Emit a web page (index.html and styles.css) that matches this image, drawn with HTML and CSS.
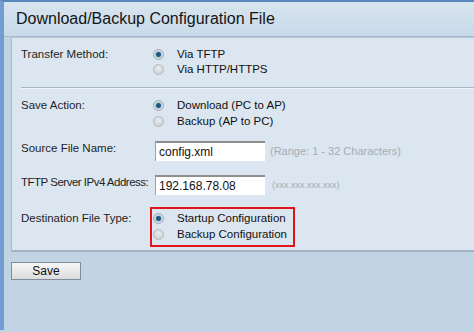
FILE: index.html
```html
<!DOCTYPE html>
<html>
<head>
<meta charset="utf-8">
<link rel="stylesheet" href="styles.css">
</head>
<body>
<div class="frame">
  <div class="header">Download/Backup Configuration File</div>
  <div class="content">
    <div class="panel">
      <div class="row first">
        <div class="label">Transfer Method:</div>
        <div class="options">
          <label class="opt"><input type="radio" class="radio" name="tm" checked>Via TFTP</label>
          <label class="opt"><input type="radio" class="radio" name="tm">Via HTTP/HTTPS</label>
        </div>
      </div>
      <div class="divider"></div>
      <div class="row second">
        <div class="label">Save Action:</div>
        <div class="options">
          <label class="opt"><input type="radio" class="radio" name="sa" checked>Download (PC to AP)</label>
          <label class="opt"><input type="radio" class="radio" name="sa">Backup (AP to PC)</label>
        </div>
      </div>
      <div class="row field src">
        <div class="label">Source File Name:</div>
        <div class="control">
          <input class="text" type="text" value="config.xml">
          <span class="hint">(Range: 1 - 32 Characters)</span>
        </div>
      </div>
      <div class="row field ip">
        <div class="label tight">TFTP Server IPv4 Address:</div>
        <div class="control">
          <input class="text" type="text" value="192.168.78.08">
          <span class="hint small">(xxx.xxx.xxx.xxx)</span>
        </div>
      </div>
      <div class="row dest">
        <div class="label">Destination File Type:</div>
        <div class="options highlight">
          <label class="opt"><input type="radio" class="radio" name="dt" checked>Startup Configuration</label>
          <label class="opt"><input type="radio" class="radio" name="dt">Backup Configuration</label>
        </div>
      </div>
    </div>
    <button class="btn">Save</button>
  </div>
</div>
</body>
</html>
```
FILE: styles.css
```css
html, body {
  margin: 0;
  padding: 0;
}
body {
  background: #c1d4e4;
  font-family: "Liberation Sans", Arial, sans-serif;
  color: #1e1e1e;
  width: 474px;
  height: 332px;
  overflow: hidden;
}
.frame {
  border-left: 4px solid #729dd3;
  border-top: 2px solid #5a86be;
  height: 330px;
  box-sizing: border-box;
}
.header {
  height: 34px;
  line-height: 34px;
  padding-left: 12px;
  font-size: 16px;
  color: #151515;
  background: linear-gradient(#d9e5f0, #c8d9e9);
  border-bottom: 1px solid #a6bacd;
}
.content {
  padding-left: 7px;
}
.panel {
  background: #dce6f0;
  border-left: 1px solid #a9b9c8;
  border-top: 1px solid #b8c7d5;
  border-bottom: 2px solid #a3b3c3;
  padding: 9px 0 3px 9px;
}
.row {
  display: grid;
  grid-template-columns: 132px auto;
  font-size: 11.5px;
}
.label {
  line-height: 15px;
  color: #1f1f1f;
  white-space: nowrap;
}
.label.tight {
  letter-spacing: -0.5px;
}
.options {
  display: flex;
  flex-direction: column;
}
.opt {
  display: flex;
  align-items: center;
  height: 15px;
  line-height: 15px;
  color: #111;
  white-space: nowrap;
}
.second .opt {
  height: 16px;
  line-height: 16px;
}
.second .label {
  line-height: 16px;
}
.radio {
  -webkit-appearance: none;
  appearance: none;
  width: 11px;
  height: 11px;
  margin: 0 13px 0 0;
  border-radius: 50%;
  border: 1px solid #b2b9c0;
  box-sizing: border-box;
  background: radial-gradient(circle at 50% 40%, #eceef0 0, #d6dadd 55%, #c3c9ce 100%);
}
.radio:checked {
  border-color: #9aa9b5;
  background: radial-gradient(circle, #0f4c72 0, #2b6b8e 2.2px, #c9d6e0 3.2px, #eef2f5 100%);
}
.divider {
  margin: 10px 0 8px 0;
  border-top: 1px solid #a9b7c4;
  border-bottom: 1px solid #eef3f8;
}
.field {
  margin-top: 12px;
}
.field .label {
  line-height: 14px;
}
.ip {
  margin-top: 14px;
}
.control {
  display: flex;
  align-items: center;
}
.text {
  width: 110px;
  height: 20px;
  box-sizing: border-box;
  margin: 0 0 0 2px;
  padding: 0 0 0 3px;
  border: none;
  border-top: 2px solid #8e8e8e;
  border-left: 1px solid #a0a0a0;
  background: #fff;
  font-family: "Liberation Sans", Arial, sans-serif;
  font-size: 12px;
  color: #111;
  outline: none;
}
.hint {
  margin-left: 5px;
  color: #a3adb6;
  font-size: 11px;
  white-space: nowrap;
}
.hint.small {
  margin-left: 7px;
  font-size: 9px;
}
.dest {
  margin-top: 12px;
}
.dest .label {
  padding-top: 3px;
  line-height: 16px;
}
.highlight {
  align-self: start;
  width: fit-content;
  margin-left: -3px;
  border: 2px solid #e3141c;
  padding: 1px 6px 3px 1px;
}
.highlight .opt {
  height: 16px;
  line-height: 16px;
}
.btn {
  display: block;
  margin-top: 10px;
  width: 70px;
  height: 18px;
  padding: 0;
  border: 1px solid #7f8d99;
  background: linear-gradient(#f7f7f7, #dcdcdc);
  font-family: "Liberation Sans", Arial, sans-serif;
  font-size: 12px;
  color: #111;
  line-height: 16px;
}
```
